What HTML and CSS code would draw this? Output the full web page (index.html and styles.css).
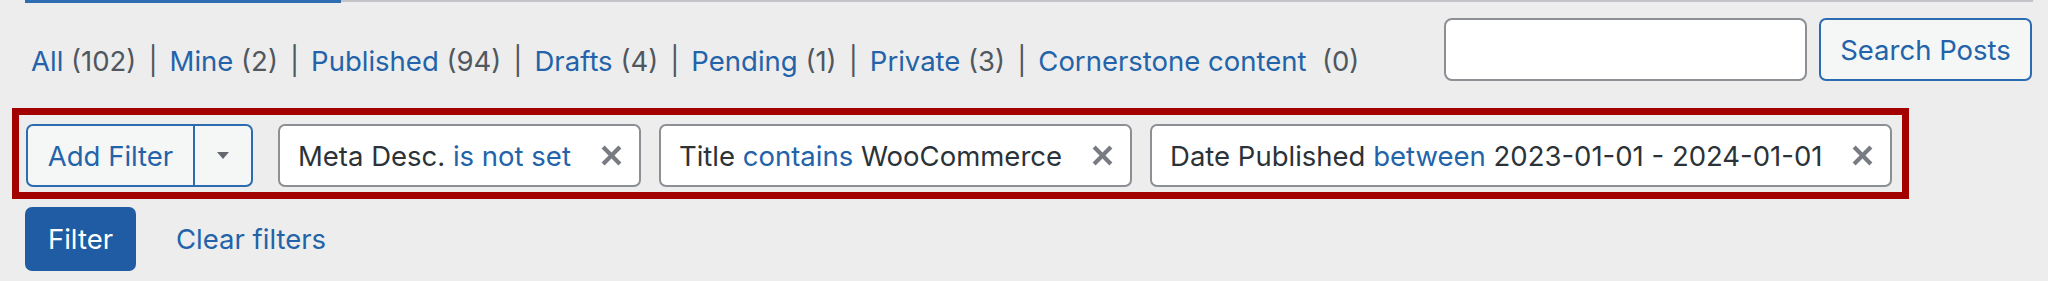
FILE: index.html
```html
<!DOCTYPE html>
<html lang="en">
<head>
  <meta charset="UTF-8">
  <title>Posts</title>
  <link rel="stylesheet" href="styles.css">
</head>
<body>
  <div class="tab-line">
      <span class="tab-active"></span>
      <span class="tab-rest"></span>
  </div>

  <div class="top-row">
      <ul class="subsubsub">
          <li><a href="#">All</a> <span class="count">(102)</span></li>
          <li class="sep">|</li>
          <li><a href="#">Mine</a> <span class="count">(2)</span></li>
          <li class="sep">|</li>
          <li><a href="#">Published</a> <span class="count">(94)</span></li>
          <li class="sep">|</li>
          <li><a href="#">Drafts</a> <span class="count">(4)</span></li>
          <li class="sep">|</li>
          <li><a href="#">Pending</a> <span class="count">(1)</span></li>
          <li class="sep">|</li>
          <li><a href="#">Private</a> <span class="count">(3)</span></li>
          <li class="sep">|</li>
          <li><a href="#">Cornerstone content</a>&nbsp; <span class="count">(0)</span></li>
      </ul>

      <div class="search-box">
          <input type="search" class="search-input">
          <button class="button">Search Posts</button>
      </div>
  </div>

  <div class="filter-frame">
      <div class="split-button">
          <span class="split-main">Add Filter</span>
          <span class="split-toggle"><span class="caret"></span></span>
      </div>

      <div class="chips">
          <div class="chip">
              <span class="chip-text">Meta Desc. <span class="op">is not set</span></span>
              <svg class="chip-close" width="21" height="21" viewBox="0 0 20 20"><path d="M2 2 L18 18 M18 2 L2 18"/></svg>
          </div>
          <div class="chip">
              <span class="chip-text">Title <span class="op">contains</span> WooCommerce</span>
              <svg class="chip-close" width="21" height="21" viewBox="0 0 20 20"><path d="M2 2 L18 18 M18 2 L2 18"/></svg>
          </div>
          <div class="chip">
              <span class="chip-text">Date Published <span class="op">between</span> 2023-01-01 - 2024-01-01</span>
              <svg class="chip-close" width="21" height="21" viewBox="0 0 20 20"><path d="M2 2 L18 18 M18 2 L2 18"/></svg>
          </div>
      </div>
  </div>

  <div class="actions">
      <button class="button-primary">Filter</button>
      <a href="#" class="clear-link">Clear filters</a>
  </div>
</body>
</html>
```

FILE: styles.css
```css
body {
    margin: 0;
    background: #ededed;
    font-family: 'Inter', 'Liberation Sans', sans-serif;
    font-size: 27.5px;
    color: #3c434a;
}

a {
    color: #2263a9;
    text-decoration: none;
}

.tab-line {
    display: flex;
    align-items: flex-start;
    margin: 0 15px 0 25px;
    height: 3px;
}

.tab-active {
    width: 316px;
    height: 3px;
    background: #2f6db3;
}

.tab-rest {
    flex: 1;
    height: 2px;
    background: #c3c4c7;
}

.top-row {
    display: flex;
    justify-content: space-between;
    align-items: flex-start;
    padding: 15px 16px 0 31px;
}

.subsubsub {
    display: flex;
    gap: 12px;
    list-style: none;
    margin: 25px 0 0;
    padding: 0;
    line-height: 36px;
    white-space: nowrap;
}

.subsubsub .count {
    color: #50575e;
}

.subsubsub .sep {
    color: #50575e;
}

.search-box {
    display: flex;
    gap: 12px;
}

.search-input {
    width: 363px;
    height: 63px;
    box-sizing: border-box;
    border: 2px solid #8c8f94;
    border-radius: 8px;
    background: #fff;
}

.button {
    width: 213px;
    height: 63px;
    box-sizing: border-box;
    border: 2px solid #2b6cb0;
    border-radius: 7px;
    background: #f5f6f6;
    color: #2263a9;
    font-family: inherit;
    font-size: 27.5px;
}

.filter-frame {
    display: flex;
    align-items: center;
    width: 1897px;
    box-sizing: border-box;
    margin: 27px 0 0 12px;
    padding: 9px 12px 5px 7px;
    border: 7px solid #a30000;
}

.split-button {
    display: flex;
    height: 63px;
    box-sizing: border-box;
    border: 2px solid #2b6cb0;
    border-radius: 7px;
    background: #f5f6f6;
    color: #2263a9;
    margin-right: 25px;
}

.split-main {
    display: flex;
    align-items: center;
    width: 165px;
    justify-content: center;
    border-right: 2px solid #2b6cb0;
}

.split-toggle {
    display: flex;
    align-items: center;
    justify-content: center;
    width: 56px;
}

.caret {
    width: 0;
    height: 0;
    border-left: 6px solid transparent;
    border-right: 6px solid transparent;
    border-top: 7px solid #646970;
}

.chips {
    display: flex;
    gap: 18px;
}

.chip {
    display: flex;
    align-items: center;
    gap: 30px;
    height: 63px;
    box-sizing: border-box;
    padding: 0 17px 0 18px;
    border: 2px solid #8c8f94;
    border-radius: 7px;
    background: #fff;
    color: #2c3338;
    white-space: nowrap;
}

.chip .op {
    color: #2263a9;
}

.chip-close {
    stroke: #787c82;
    stroke-width: 4;
    fill: none;
}

.actions {
    display: flex;
    align-items: center;
    gap: 40px;
    margin: 8px 0 0 25px;
}

.button-primary {
    width: 111px;
    height: 64px;
    border: none;
    border-radius: 7px;
    background: #1f5ca3;
    color: #fff;
    font-family: inherit;
    font-size: 27.5px;
}

.clear-link {
    font-size: 27.5px;
}
```
